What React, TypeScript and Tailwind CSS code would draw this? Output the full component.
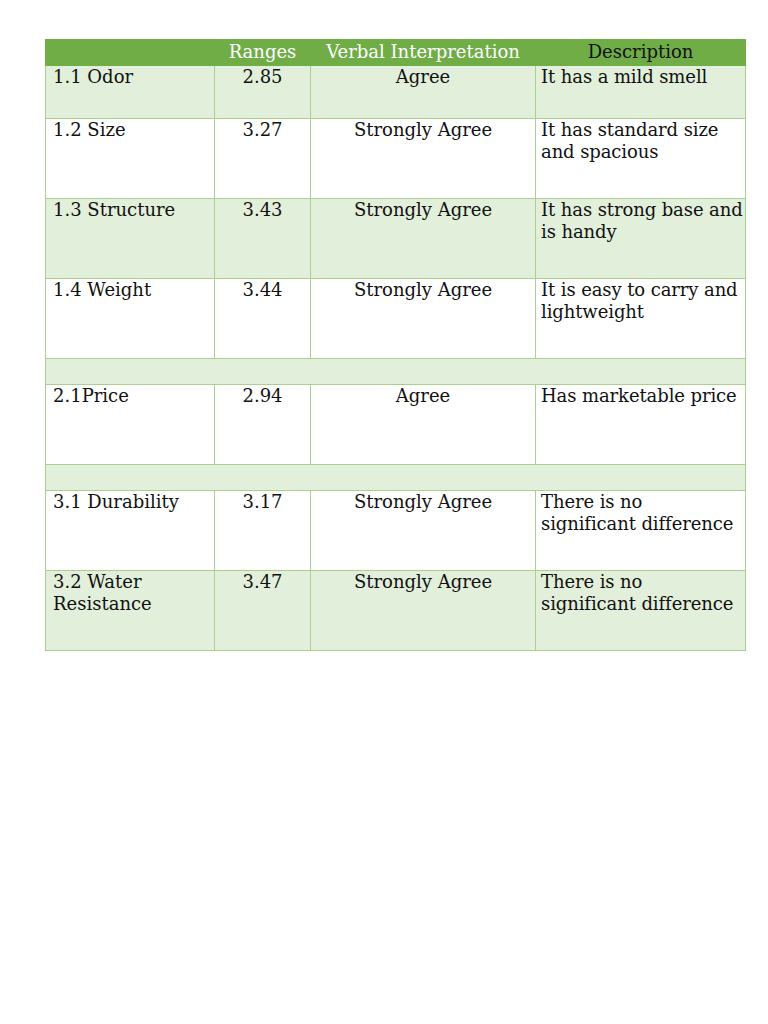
type Row = { label: string[]; range: string; verbal: string; desc: string[]; shaded: boolean; h: string };

const rows: Row[] = [
  { label: ["1.1 Odor"], range: "2.85", verbal: "Agree", desc: ["It has a mild smell"], shaded: true, h: "h-[53px]" },
  { label: ["1.2 Size"], range: "3.27", verbal: "Strongly Agree", desc: ["It has standard size", "and spacious"], shaded: false, h: "h-[80px]" },
  { label: ["1.3 Structure"], range: "3.43", verbal: "Strongly Agree", desc: ["It has strong base and", "is handy"], shaded: true, h: "h-[80px]" },
  { label: ["1.4 Weight"], range: "3.44", verbal: "Strongly Agree", desc: ["It is easy to carry and", "lightweight"], shaded: false, h: "h-[80px]" },
];

const rows2: Row[] = [
  { label: ["3.1 Durability"], range: "3.17", verbal: "Strongly Agree", desc: ["There is no", "significant difference"], shaded: false, h: "h-[80px]" },
  { label: ["3.2 Water", "Resistance"], range: "3.47", verbal: "Strongly Agree", desc: ["There is no", "significant difference"], shaded: true, h: "h-[80px]" },
];

const cell = "border border-[#a9d08e] align-top pt-0";

function Lines({ lines }: { lines: string[] }) {
  return (
    <>
      {lines.map((l) => (
        <div key={l} className="whitespace-nowrap">
          {l}
        </div>
      ))}
    </>
  );
}

function DataRow({ label, range, verbal, desc, shaded, h }: Row) {
  return (
    <tr className={`${h} ${shaded ? "bg-[#e2efda]" : "bg-white"}`}>
      <td className={`${cell} px-[7px]`}>
        <Lines lines={label} />
      </td>
      <td className={`${cell} px-[7px] text-center`}>{range}</td>
      <td className={`${cell} px-[7px] text-center`}>{verbal}</td>
      <td className={`${cell} pl-[5px] pr-[2px] tracking-[-0.1px]`}>
        <Lines lines={desc} />
      </td>
    </tr>
  );
}

function Spacer() {
  return (
    <tr className="h-[26px] bg-[#e2efda]">
      <td colSpan={4} className="border border-[#a9d08e]" />
    </tr>
  );
}

export default function App() {
  return (
    <div className="min-h-[1024px] bg-white pt-[39px] pl-[45px] font-['DejaVu_Serif',serif] text-[18px] leading-[22px] text-[#111]">
      <table className="w-[700px] table-fixed border-collapse">
        <colgroup>
          <col className="w-[169px]" />
          <col className="w-[96px]" />
          <col className="w-[225px]" />
          <col className="w-[210px]" />
        </colgroup>
        <thead>
          <tr className="h-[26px] bg-[#70ad47]">
            <th className="border border-[#70ad47]" />
            <th className="border border-[#70ad47] pb-[2px] text-center font-normal text-white">Ranges</th>
            <th className="border border-[#70ad47] pb-[2px] text-center font-normal text-white">Verbal Interpretation</th>
            <th className="border border-[#70ad47] pb-[2px] text-center font-normal text-[#111]">Description</th>
          </tr>
        </thead>
        <tbody>
          {rows.map((r) => (
            <DataRow key={r.range} {...r} />
          ))}
          <Spacer />
          <DataRow label={["2.1Price"]} range="2.94" verbal="Agree" desc={["Has marketable price"]} shaded={false} h="h-[80px]" />
          <Spacer />
          {rows2.map((r) => (
            <DataRow key={r.range} {...r} />
          ))}
        </tbody>
      </table>
    </div>
  );
}
